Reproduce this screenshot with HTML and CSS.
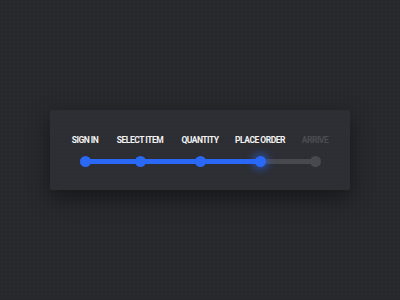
FILE: index.html
```html
<!DOCTYPE html>
<html lang="en">
<head>
    <meta charset="UTF-8">
    <title>Order steps</title>
    <link rel="stylesheet" href="styles.css">
</head>
<body>
<div class="card">
    <div class="labels">
        <span class="label">SIGN IN</span>
        <span class="label">SELECT ITEM</span>
        <span class="label">QUANTITY</span>
        <span class="label">PLACE ORDER</span>
        <span class="label muted">ARRIVE</span>
    </div>
    <div class="track">
        <span class="dot"></span>
        <span class="dot"></span>
        <span class="dot"></span>
        <span class="dot current"></span>
        <span class="dot todo"></span>
    </div>
</div>
</body>
</html>
```

FILE: styles.css
```css
* {
    margin: 0;
    padding: 0;
    box-sizing: border-box;
}

html, body {
    height: 100%;
}

body {
    background-color: #27282c;
    background-image: radial-gradient(rgba(255, 255, 255, .025) 0.6px, transparent 0.8px);
    background-size: 4px 4px;
    display: flex;
    align-items: center;
    justify-content: center;
    font-family: Roboto, "Liberation Sans", sans-serif;
}

.card {
    width: 300px;
    height: 80px;
    background-color: #2d2e33;
    background-image: radial-gradient(rgba(255, 255, 255, .025) 0.6px, transparent 0.8px);
    background-size: 4px 4px;
    border-radius: 2px;
    box-shadow: 0 8px 22px rgba(0, 0, 0, .45);
    padding-top: 25px;
}

/* column widths put the step centres at 35 / 90 / 150 / 210 / 265 */
.labels, .track {
    display: grid;
    grid-template-columns: 70px 40px 80px 40px 70px;
    justify-items: center;
}

.label {
    font-size: 8.5px;
    font-weight: 700;
    letter-spacing: -0.5px;
    line-height: 11px;
    color: #f2f2f2;
    white-space: nowrap;
}

.label.muted {
    color: #4b4c51;
}

.track {
    margin-top: 10px;
    height: 11px;
    align-items: center;
    background:
        linear-gradient(#2a68f6, #2a68f6) 35px center / 175px 5px no-repeat,
        linear-gradient(#48494e, #48494e) 35px center / 230px 5px no-repeat;
}

.dot {
    width: 11px;
    height: 11px;
    border-radius: 50%;
    background: #2a68f6;
}

.dot.current {
    box-shadow: 0 0 8px 2px rgba(42, 104, 246, .65);
}

.dot.todo {
    background: #48494e;
}
```
